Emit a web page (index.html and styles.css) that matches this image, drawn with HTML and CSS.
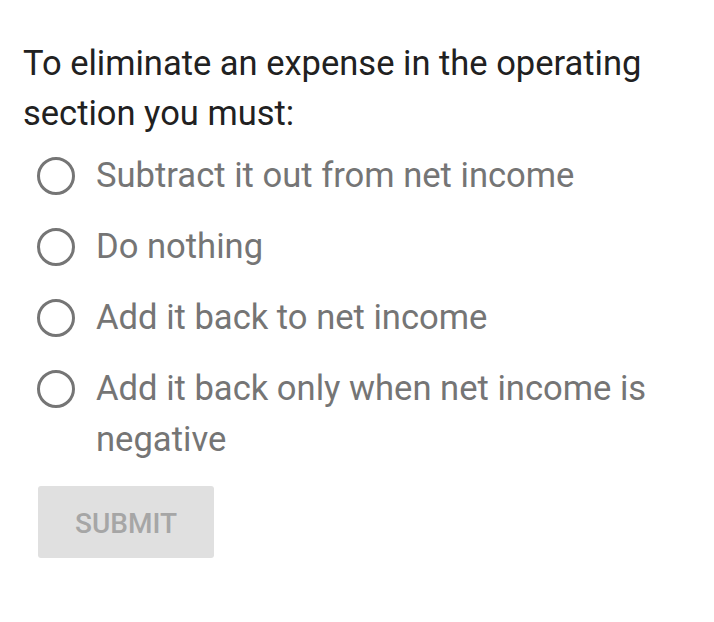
FILE: index.html
```html
<!DOCTYPE html>
<html lang="en">
<head>
<meta charset="UTF-8">
<meta name="viewport" content="width=device-width, initial-scale=1.0">
<title>Quiz</title>
<link rel="stylesheet" href="styles.css">
</head>
<body>
    <div class="quiz">
        <p class="question">To eliminate an expense in the operating section you must:</p>
        <div class="options">
            <label class="option"><span class="radio"></span><span class="option-text">Subtract it out from net income</span></label>
            <label class="option"><span class="radio"></span><span class="option-text">Do nothing</span></label>
            <label class="option"><span class="radio"></span><span class="option-text">Add it back to net income</span></label>
            <label class="option"><span class="radio"></span><span class="option-text">Add it back only when net income is negative</span></label>
        </div>
        <button class="submit" disabled>SUBMIT</button>
    </div>
</body>
</html>
```

FILE: styles.css
```css
body {
    margin: 0;
    background-color: #fff;
    font-family: Roboto, "Noto Sans", sans-serif;
}
.quiz {
    padding: 38px 40px 0 23px;
}
.question {
    margin: 0;
    font-size: 34.5px;
    line-height: 50px;
    color: #212121;
}
.options {
    display: flex;
    flex-direction: column;
    padding-top: 2px;
}
.option {
    display: flex;
    align-items: flex-start;
    gap: 21px;
    padding: 10px 0 10px 14px;
}
.radio {
    flex: none;
    width: 32px;
    height: 32px;
    margin-top: 7px;
    border: 3.5px solid #757575;
    border-radius: 50%;
}
.option-text {
    font-size: 34.6px;
    line-height: 51px;
    color: #757575;
}
.submit {
    display: block;
    margin: 11px 0 0 15px;
    width: 176px;
    height: 72px;
    border: none;
    border-radius: 3px;
    background-color: #e0e0e0;
    color: #a6a6a6;
    font-family: Roboto, "Noto Sans", sans-serif;
    font-size: 28px;
    font-weight: 500;
    padding-top: 3px;
}
```
